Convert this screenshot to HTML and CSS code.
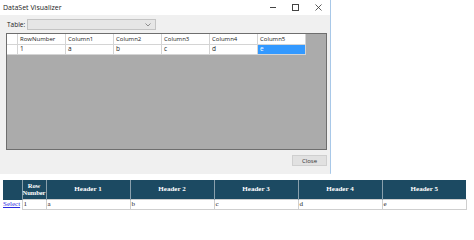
FILE: index.html
```html
<!DOCTYPE html>
<html>
<head>
<meta charset="utf-8">
<link rel="stylesheet" href="styles.css">
</head>
<body>
<div class="window">
  <div class="titlebar">
    <span class="title">DataSet Visualizer</span>
    <div class="controls">
      <span class="ctl min"></span>
      <span class="ctl max"></span>
      <span class="ctl close">
        <svg width="7" height="7" viewBox="0 0 7 7"><path d="M0.5 0.5L6.5 6.5M6.5 0.5L0.5 6.5" stroke="#333" stroke-width="0.8"/></svg>
      </span>
    </div>
  </div>
  <div class="body">
    <div class="toolbar">
      <span class="label">Table:</span>
      <div class="combo">
        <svg class="arrow" width="6" height="4" viewBox="0 0 6 4"><path d="M0.5 0.5L3 3L5.5 0.5" fill="none" stroke="#777" stroke-width="0.8"/></svg>
      </div>
    </div>
    <div class="grid">
      <div class="grow head">
        <div class="rh"></div>
        <div class="c">RowNumber</div>
        <div class="c">Column1</div>
        <div class="c">Column2</div>
        <div class="c">Column3</div>
        <div class="c">Column4</div>
        <div class="c">Column5</div>
      </div>
      <div class="grow data">
        <div class="rh"></div>
        <div class="c">1</div>
        <div class="c">a</div>
        <div class="c">b</div>
        <div class="c">c</div>
        <div class="c">d</div>
        <div class="c sel">e</div>
      </div>
    </div>
    <div class="footer">
      <button class="btn">Close</button>
    </div>
  </div>
</div>
<table class="gv">
  <colgroup>
    <col class="w-sel">
    <col class="w-rn">
    <col class="w-h">
    <col class="w-h">
    <col class="w-h">
    <col class="w-h">
    <col class="w-h">
  </colgroup>
  <thead>
    <tr>
      <th></th>
      <th class="rn">Row Number</th>
      <th>Header 1</th>
      <th>Header 2</th>
      <th>Header 3</th>
      <th>Header 4</th>
      <th>Header 5</th>
    </tr>
  </thead>
  <tbody>
    <tr>
      <td class="selcell"><a href="#">Select</a></td>
      <td>1</td>
      <td>a</td>
      <td>b</td>
      <td>c</td>
      <td>d</td>
      <td>e</td>
    </tr>
  </tbody>
</table>
</body>
</html>
```
FILE: styles.css
```css
html, body {
  margin: 0;
  padding: 0;
  background: #ffffff;
}
.window {
  width: 330px;
  height: 173px;
  border-right: 1px solid #a8c8e8;
  border-bottom: 1px solid #c8dcef;
  display: flex;
  flex-direction: column;
  font-family: "Open Sans", "Noto Sans", sans-serif;
  font-size: 6.5px;
  color: #222;
}
.titlebar {
  height: 15px;
  background: #ffffff;
  display: flex;
  align-items: center;
  justify-content: space-between;
  padding-left: 3px;
}
.title {
  font-size: 7px;
  margin-top: -1px;
  color: #1a1a1a;
}
.controls {
  display: flex;
  align-items: center;
  height: 15px;
}
.ctl {
  width: 23px;
  display: flex;
  align-items: center;
  justify-content: center;
  height: 15px;
}
.min::before {
  content: "";
  width: 6px;
  height: 1px;
  background: #444;
}
.max::before {
  content: "";
  width: 5px;
  height: 5px;
  border: 1px solid #444;
}
.body {
  flex: 1;
  background: #f0f0f0;
  display: flex;
  flex-direction: column;
  padding: 4px 3px 8px 6px;
}
.toolbar {
  display: flex;
  align-items: center;
  height: 11px;
  margin-bottom: 3px;
}
.label {
  width: 20px;
  padding-left: 1px;
}
.combo {
  width: 129px;
  height: 11px;
  border: 1px solid #c4c4c4;
  background: #e6e6e6;
  display: flex;
  align-items: center;
  justify-content: flex-end;
  padding-right: 4px;
  box-sizing: border-box;
}
.grid {
  height: 117px;
  background: #ababab;
  border: 1px solid #6e6e6e;
  box-sizing: border-box;
}
.grow {
  display: flex;
  height: 10px;
}
.head {
  height: 11px;
}
.rh {
  width: 11px;
  flex: none;
  box-sizing: border-box;
  background: #ffffff;
  border-right: 1px solid #d4d4d4;
  border-bottom: 1px solid #d4d4d4;
}
.c {
  width: 48px;
  flex: none;
  box-sizing: border-box;
  background: #ffffff;
  border-right: 1px solid #d4d4d4;
  border-bottom: 1px solid #d4d4d4;
  padding-left: 2px;
  display: flex;
  align-items: center;
  line-height: 1;
  white-space: nowrap;
  overflow: hidden;
}
.head .c {
  font-size: 6px;
}
.c.sel {
  background: #3399ff;
  color: #ffffff;
}
.footer {
  display: flex;
  justify-content: flex-end;
  padding-top: 5px;
}
.btn {
  width: 35px;
  height: 11px;
  border: 1px solid #cfcfcf;
  background: #e1e1e1;
  font-family: "Open Sans", "Noto Sans", sans-serif;
  font-size: 6px;
  color: #333;
  padding: 0;
  line-height: 1;
}
.gv {
  margin: 6px 0 0 3px;
  border-collapse: collapse;
  font-family: "Liberation Serif", serif;
  font-size: 7px;
  width: 463px;
  table-layout: fixed;
}
.gv th {
  background: #1c4a62;
  color: #ffffff;
  font-weight: bold;
  height: 19px;
  padding: 0;
  line-height: 1.05;
  border-right: 1px solid #8aa0ac;
  overflow: visible;
}
.gv th.rn {
  font-size: 6.6px;
  letter-spacing: -0.1px;
}
.gv th:last-child {
  border-right: 0;
}
.w-sel { width: 19px; }
.w-rn { width: 24px; }
.w-h { width: 84px; }
.gv td {
  height: 9px;
  padding: 0 0 0 1px;
  border: 1px solid #cfcfcf;
  line-height: 1;
  color: #222;
  white-space: nowrap;
}
.gv td.selcell {
  border: 0;
  padding: 0;
}
.selcell a {
  color: #2a2ae0;
}
```
